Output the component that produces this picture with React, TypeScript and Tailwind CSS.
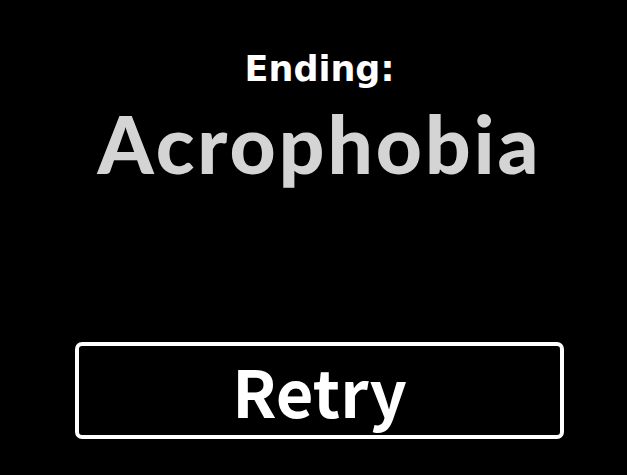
export default function App() {
  return (
    <div className="w-[627px] h-[475px] bg-black pl-[12px] flex flex-col items-center overflow-hidden">
      <div className="mt-[49px] text-white text-[35px] leading-[40px] font-bold font-['DejaVu_Sans',sans-serif]">
        Ending:
      </div>
      <div className="mt-[4px] text-[#d4d4d4] text-[80px] leading-[100px] font-black tracking-[3px] font-['Lato',sans-serif]">
        Acrophobia
      </div>
      <button className="mt-[149px] w-[489px] h-[97px] border-4 border-white rounded-[7px] bg-black flex items-center justify-center text-white text-[65px] font-bold leading-none font-['Noto_Sans_CJK_SC','Noto_Sans',sans-serif]">
        Retry
      </button>
    </div>
  );
}
